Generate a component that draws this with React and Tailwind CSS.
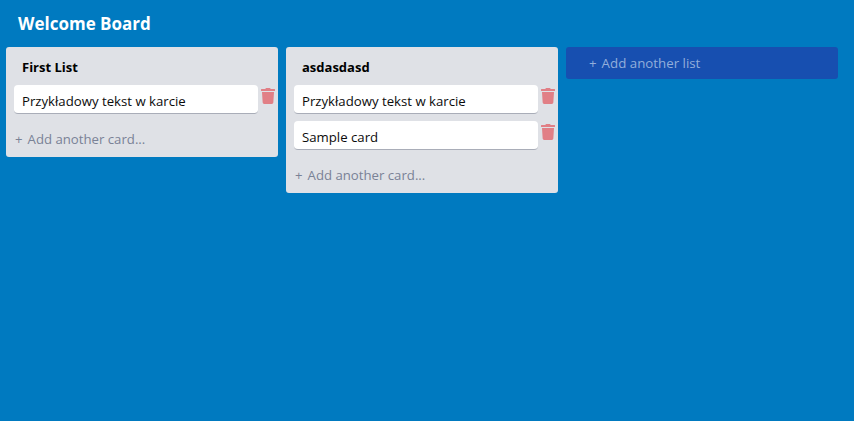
import React from "react";
import { FaTrash } from "react-icons/fa";

const lists = [
  { id: 1, title: "First List", cards: ["Przykładowy tekst w karcie"] },
  { id: 2, title: "asdasdasd", cards: ["Przykładowy tekst w karcie", "Sample card"] },
];

function Card({ text }) {
  return (
    <div className="flex items-start">
      <div className="shrink-0 w-[244px] h-[29px] pl-2 pt-[6px] flex items-center bg-white rounded-[4px] border-b border-[#a9adb8] text-[13.2px] text-[#0b0b0b]">
        {text}
      </div>
      <FaTrash className="shrink-0 ml-[3px] mt-[3px] w-[14px] h-[16px] text-[#e17f86]" />
    </div>
  );
}

function List({ title, cards }) {
  return (
    <div className="w-[272px] bg-[#dfe1e6] rounded-[3px] px-2 pb-2">
      <h2 className="h-[38px] pl-2 pt-[4px] flex items-center text-[13px] font-bold text-black">
        {title}
      </h2>
      <div className="flex flex-col gap-[7px]">
        {cards.map((card, index) => (
          <Card text={card} key={index} />
        ))}
      </div>
      <div className="mt-[11px] h-[24px] pl-px pt-[6px] flex items-center text-[13.2px] text-[#7a8296]">
        <span className="mr-[5px]">+</span> Add another card...
      </div>
    </div>
  );
}

function App() {
  return (
    <div className="min-h-[421px] bg-[#007ac0] font-['Open_Sans',sans-serif]">
      <h1 className="h-[47px] pl-[18px] flex items-center text-[17px] font-bold text-white">
        Welcome Board
      </h1>
      <div className="flex items-start gap-2 px-[6px]">
        {lists.map((list) => (
          <List {...list} key={list.id} />
        ))}
        <div className="w-[272px] h-[32px] pl-[23px] pt-[2px] flex items-center bg-[#174fb0] rounded-[3px] text-[13.3px] text-[#92aedb]">
          <span className="mr-[5px]">+</span> Add another list
        </div>
      </div>
    </div>
  );
}

export default App;
